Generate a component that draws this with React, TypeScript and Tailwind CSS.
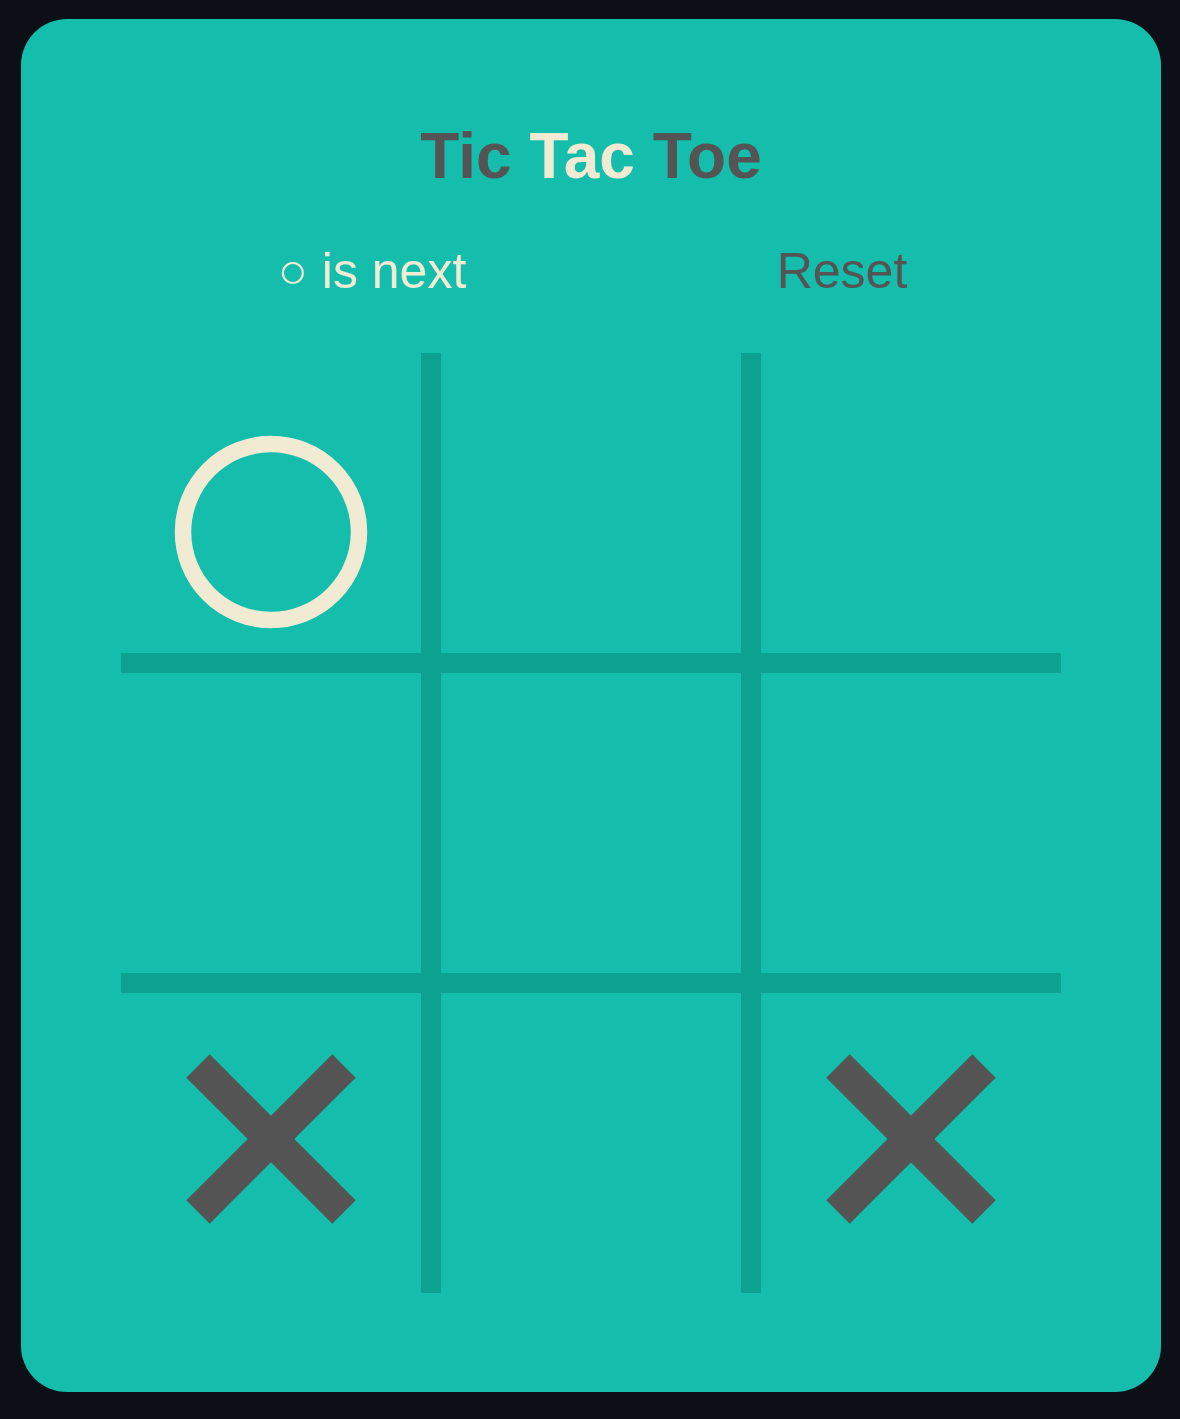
import React from "react";

type Mark = "X" | "O" | null;

const board: Mark[] = ["O", null, null, null, null, null, "X", null, "X"];

function XMark() {
  return (
    <svg width="300" height="300" viewBox="0 0 300 300" className="block">
      <line x1="77" y1="73" x2="223" y2="219" stroke="#545454" strokeWidth="33" />
      <line x1="223" y1="73" x2="77" y2="219" stroke="#545454" strokeWidth="33" />
    </svg>
  );
}

function OMark() {
  return (
    <svg width="300" height="300" viewBox="0 0 300 300" className="block">
      <circle cx="150" cy="179" r="88" fill="none" stroke="#f2ebd3" strokeWidth="16.5" />
    </svg>
  );
}

export default function App() {
  return (
    <div
      className="min-h-screen bg-[#0d0f17] pl-[21px] pt-[19px] pb-[27px]"
      style={{ fontFamily: '"Liberation Sans", Arial, sans-serif' }}
    >
      <div className="w-[1140px] rounded-[46px] bg-[#14bdac] pt-[105px] pb-[99px] flex flex-col items-center">
        <h1 className="text-[64px] leading-none font-bold text-[#545454] h-[64px]">
          Tic <span className="text-[#f2ebd3]">Tac</span> Toe
        </h1>
        <div className="mt-[58px] ml-8 w-[940px] grid grid-cols-2 text-[50px] leading-none h-[50px]">
          <div className="text-center text-[#f2ebd3]">○ is next</div>
          <button className="text-center text-[#545454] leading-none">Reset</button>
        </div>
        <div className="mt-[57px] w-[940px] grid grid-cols-3 gap-[20px] bg-[#0da192]">
          {board.map((m, i) => (
            <div key={i} className="h-[300px] bg-[#14bdac]">
              {m === "X" ? <XMark /> : m === "O" ? <OMark /> : null}
            </div>
          ))}
        </div>
      </div>
    </div>
  );
}
